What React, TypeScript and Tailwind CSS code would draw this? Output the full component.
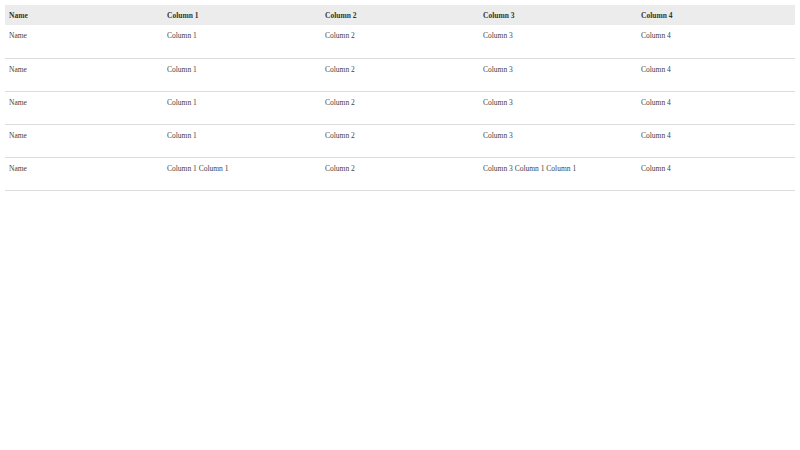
const rows = [
  ["Name", "Column 1", "Column 2", "Column 3", "Column 4"],
  ["Name", "Column 1", "Column 2", "Column 3", "Column 4"],
  ["Name", "Column 1", "Column 2", "Column 3", "Column 4"],
  ["Name", "Column 1", "Column 2", "Column 3", "Column 4"],
  ["Name", "Column 1 Column 1", "Column 2", "Column 3 Column 1 Column 1", "Column 4"],
];

const headers = ["Name", "Column 1", "Column 2", "Column 3", "Column 4"];

export default function App() {
  return (
    <div className="min-h-[450px] bg-white p-[5px] font-['Liberation_Serif',serif] text-[7.5px] text-[#444]">
      <table className="w-full table-fixed border-collapse">
        <thead>
          <tr className="bg-[#ececec]">
            {headers.map((h, i) => (
              <th key={i} className="h-5 px-[4px] pt-[1px] text-left align-middle font-bold text-[#333]">
                {h}
              </th>
            ))}
          </tr>
        </thead>
        <tbody>
          {rows.map((row, r) => (
            <tr key={r} className="border-b border-[#dcdcdc]">
              {row.map((cell, c) => (
                <td key={c} className="h-[33px] px-[4px] pt-[6px] align-top leading-[1.2]">
                  {cell}
                </td>
              ))}
            </tr>
          ))}
        </tbody>
      </table>
    </div>
  );
}
